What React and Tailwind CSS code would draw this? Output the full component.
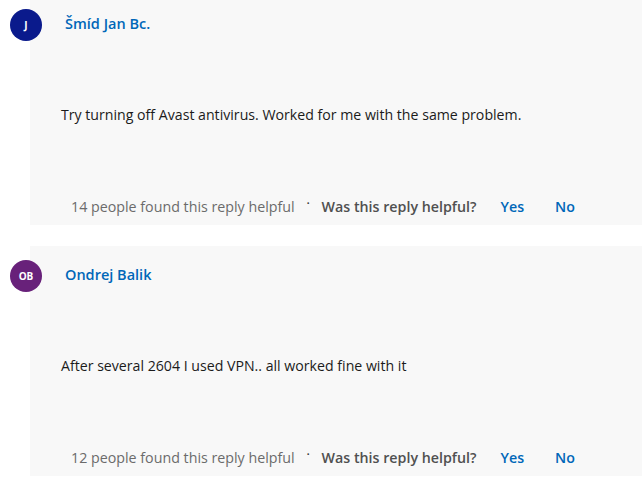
const replies = [
  {
    initials: 'J',
    color: 'bg-[#0a1a8c]',
    name: 'Šmíd Jan Bc.',
    body: 'Try turning off Avast antivirus. Worked for me with the same problem.',
    helpful: 14,
  },
  {
    initials: 'OB',
    color: 'bg-[#68217a]',
    name: 'Ondrej Balik',
    body: 'After several 2604 I used VPN.. all worked fine with it',
    helpful: 12,
  },
]

const Reply = ({ reply, first }) => (
  <div className={`flex ${first ? '-mt-[5px]' : 'mt-[21px]'}`}>
    <div
      className={`relative z-10 ml-[10px] mt-[14px] flex h-8 w-8 shrink-0 items-center justify-center rounded-full ${reply.color} text-[10px] font-bold text-white`}
    >
      {reply.initials}
    </div>
    <div className="-ml-3 flex h-[230px] flex-1 flex-col bg-[#f8f8f8]">
      <div className="pl-[35px] pt-[18px] text-[14.5px] font-semibold leading-[22px] text-[#0067b8]">
        {reply.name}
      </div>
      <p className="mt-[70px] pl-[31px] text-[14.15px] leading-[20px] text-[#1b1b1b]">
        {reply.body}
      </p>
      <div className="mt-[72px] flex items-center pl-[41px] text-[14.25px] leading-[20px]">
        <span className="text-[#6b6b6b]">{reply.helpful} people found this reply helpful</span>
        <span className="ml-[12px] -mt-[8px] text-[10px] font-bold text-[#333]">·</span>
        <span className="ml-[12px] font-semibold text-[#505050]">Was this reply helpful?</span>
        <button className="ml-[24px] font-semibold text-[#0067b8]">Yes</button>
        <button className="ml-[31px] font-semibold text-[#0067b8]">No</button>
      </div>
    </div>
  </div>
)

export default function App() {
  return (
    <div
      className="h-[477px] w-[642px] overflow-hidden bg-white"
      style={{ fontFamily: '"Segoe UI", "Open Sans", "Noto Sans", sans-serif' }}
    >
      {replies.map((r, i) => (
        <Reply key={r.name} reply={r} first={i === 0} />
      ))}
    </div>
  )
}
